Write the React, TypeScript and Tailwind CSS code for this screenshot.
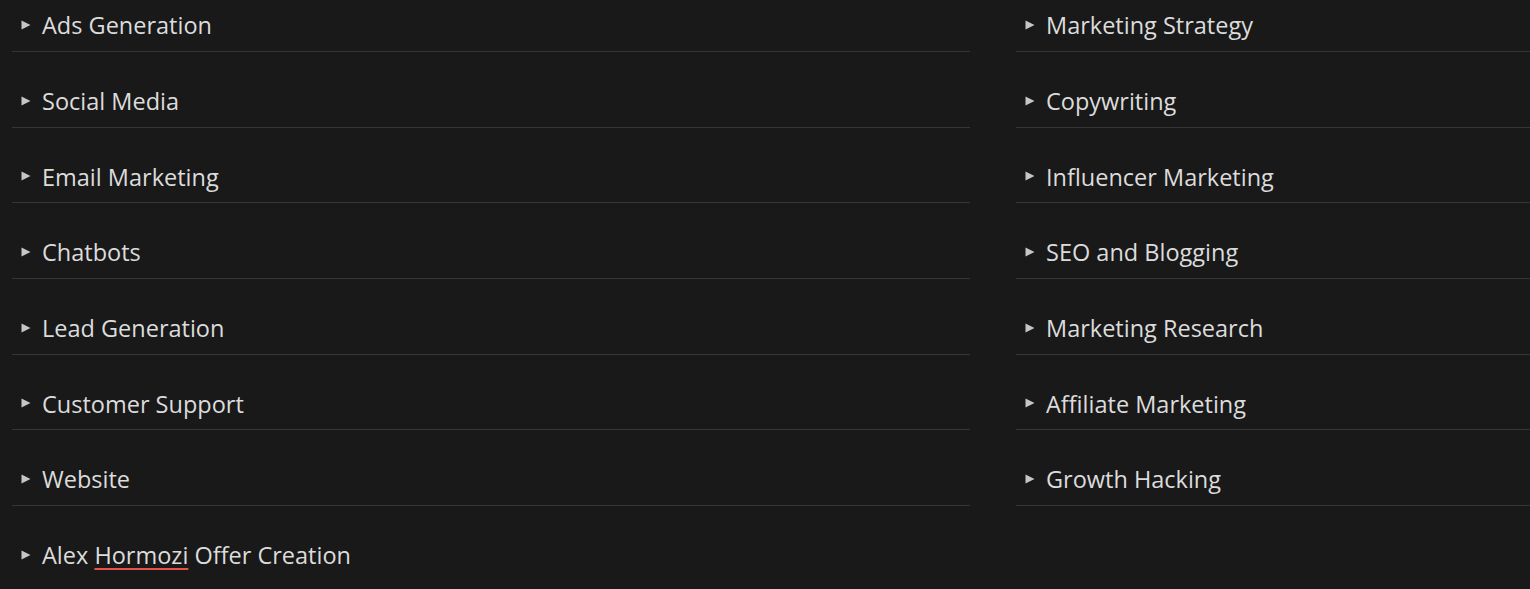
import React from "react";

const left = [
  "Ads Generation",
  "Social Media",
  "Email Marketing",
  "Chatbots",
  "Lead Generation",
  "Customer Support",
  "Website",
];
const right = [
  "Marketing Strategy",
  "Copywriting",
  "Influencer Marketing",
  "SEO and Blogging",
  "Marketing Research",
  "Affiliate Marketing",
  "Growth Hacking",
];

function Tri() {
  return (
    <svg width="10" height="10" viewBox="0 0 10 10" className="shrink-0 mr-[11px] ml-[9px] -mt-[1px]">
      <path d="M0.5 0.5 L9.5 5 L0.5 9.5 Z" fill="#c6c6c6" />
    </svg>
  );
}

function Row({ children, border = true }: { children: React.ReactNode; border?: boolean }) {
  return (
    <div
      className={
        "h-[52px] flex items-center " + (border ? "border-b border-[#363636]" : "")
      }
    >
      <Tri />
      <span className="text-[23.5px] font-medium text-[#dcdcdc] leading-none mt-[1px]">{children}</span>
    </div>
  );
}

export default function App() {
  return (
    <div
      className="w-[1530px] h-[589px] overflow-hidden bg-[#191919] pl-[12px]"
      style={{ fontFamily: '"Open Sans", "Noto Sans", sans-serif' }}
    >
      <div className="flex gap-[46px]">
        <div className="w-[958px] shrink-0 flex flex-col gap-y-[23.67px]">
          {left.map((t) => (
            <Row key={t}>{t}</Row>
          ))}
          <Row border={false}>
            Alex{" "}
            <span className="underline decoration-[#e5534b] decoration-2 underline-offset-[4px]">
              Hormozi
            </span>{" "}
            Offer Creation
          </Row>
        </div>
        <div className="w-[958px] shrink-0 flex flex-col gap-y-[23.67px]">
          {right.map((t) => (
            <Row key={t}>{t}</Row>
          ))}
        </div>
      </div>
    </div>
  );
}
